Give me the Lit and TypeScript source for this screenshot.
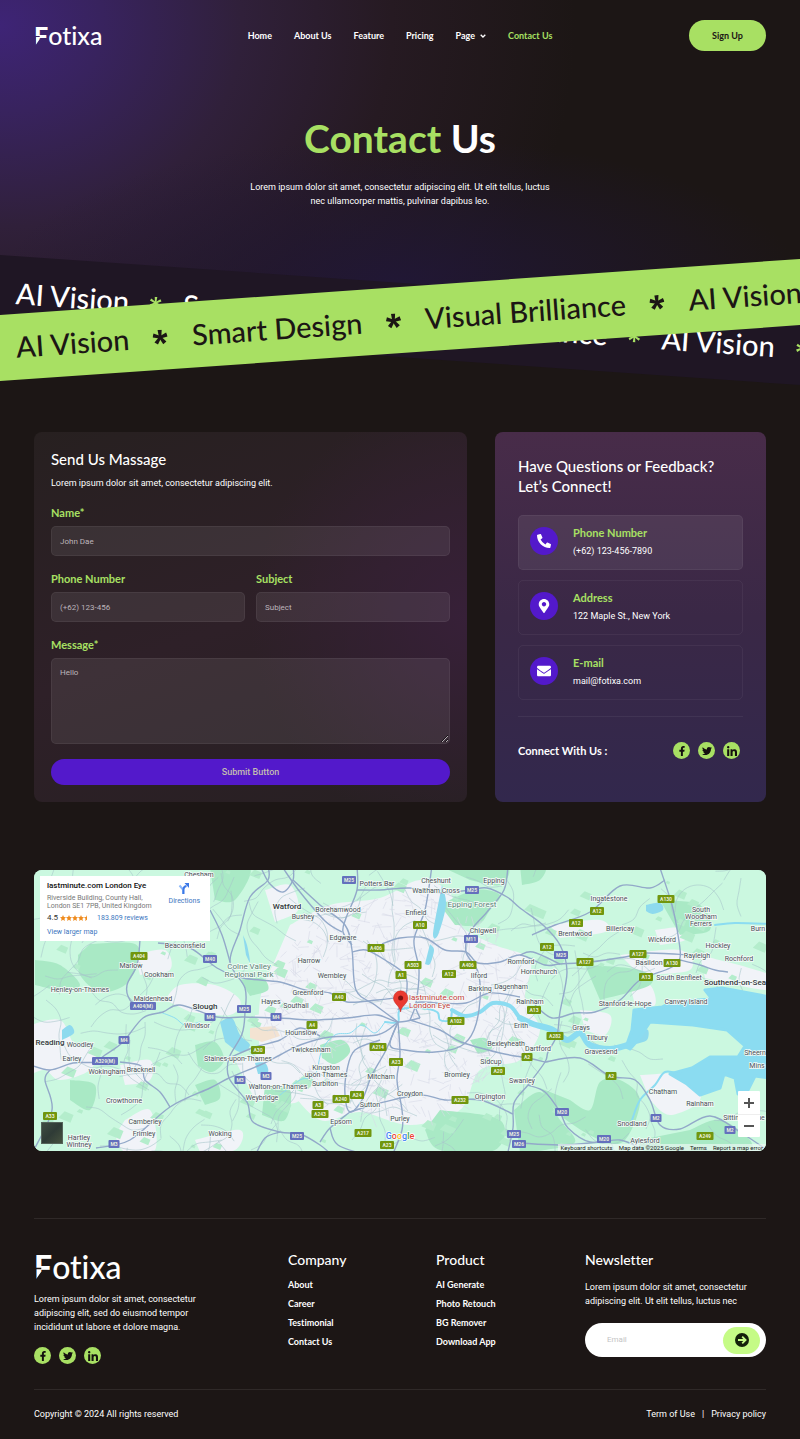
import { LitElement, html, svg, css } from "lit";
import { customElement, property } from "lit/decorators.js";

/* ---------- icons ---------- */

const ICONS: Record<string, { box: string; d: string }> = {
  facebook: {
    box: "0 0 320 512",
    d: "M279.14 288l14.22-92.66h-88.91v-60.13c0-25.35 12.42-50.06 52.24-50.06h40.42V6.26S260.43 0 225.36 0c-73.22 0-121.08 44.38-121.08 124.72v70.62H22.89V288h81.39v224h100.17V288z",
  },
  twitter: {
    box: "0 0 512 512",
    d: "M459.37 151.716c.325 4.548.325 9.097.325 13.645 0 138.72-105.583 298.558-298.558 298.558-59.452 0-114.68-17.219-161.137-47.106 8.447.974 16.568 1.299 25.34 1.299 49.055 0 94.213-16.568 130.274-44.832-46.132-.975-84.792-31.188-98.112-72.772 6.498.974 12.995 1.624 19.818 1.624 9.421 0 18.843-1.3 27.614-3.573-48.081-9.747-84.143-51.98-84.143-102.985v-1.299c13.969 7.797 30.214 12.67 47.431 13.319-28.264-18.843-46.781-51.005-46.781-87.391 0-19.492 5.197-37.36 14.294-52.954 51.655 63.675 129.3 105.258 216.365 109.807-1.624-7.797-2.599-15.918-2.599-24.04 0-57.828 46.782-104.934 104.934-104.934 30.213 0 57.502 12.67 76.67 33.137 23.715-4.548 46.456-13.32 66.599-25.34-7.798 24.366-24.366 44.833-46.132 57.827 21.117-2.273 41.584-8.122 60.426-16.243-14.292 20.791-32.161 39.308-52.628 54.253z",
  },
  linkedin: {
    box: "0 0 448 448",
    d: "M100.28 448H7.4V148.9h92.88zM53.79 108.1C24.09 108.1 0 83.5 0 53.8a53.79 53.79 0 0 1 107.58 0c0 29.7-24.1 54.3-53.79 54.3zM447.9 448h-92.68V302.4c0-34.7-.7-79.2-48.29-79.2-48.29 0-55.69 37.7-55.69 76.7V448h-92.78V148.9h89.08v40.8h1.3c12.4-23.5 42.69-48.3 87.88-48.3 94 0 111.28 61.9 111.28 142.3V448z",
  },
  phone: {
    box: "0 0 512 512",
    d: "M497.39 361.8l-112-48a24 24 0 0 0-28 6.9l-49.6 60.6A370.66 370.66 0 0 1 130.6 204.11l60.6-49.6a23.94 23.94 0 0 0 6.9-28l-48-112A24.16 24.16 0 0 0 122.6.61l-104 24A24 24 0 0 0 0 48c0 256.5 207.9 464 464 464a24 24 0 0 0 23.4-18.6l24-104a24.29 24.29 0 0 0-14.01-27.6z",
  },
  marker: {
    box: "0 0 384 512",
    d: "M172.268 501.67C26.97 291.031 0 269.413 0 192 0 85.961 85.961 0 192 0s192 85.961 192 192c0 77.413-26.97 99.031-172.268 309.67-9.535 13.774-29.93 13.773-39.464 0zM192 272c44.183 0 80-35.817 80-80s-35.817-80-80-80-80 35.817-80 80 35.817 80 80 80z",
  },
  envelope: {
    box: "0 0 512 512",
    d: "M502.3 190.8c3.9-3.1 9.7-.2 9.7 4.7V400c0 26.5-21.5 48-48 48H48c-26.5 0-48-21.5-48-48V195.6c0-5 5.7-7.8 9.7-4.7 22.4 17.4 52.1 39.5 154.1 113.6 21.1 15.4 56.7 47.8 92.2 47.6 35.7.3 72-32.8 92.3-47.6 102-74.1 131.6-96.3 154-113.7zM256 320c23.2.4 56.6-29.2 73.4-41.4 132.7-96.3 142.8-104.7 173.4-128.7 5.8-4.5 9.2-11.5 9.2-18.9v-19c0-26.5-21.5-48-48-48H48c-26.5 0-48 21.5-48 48v19c0 7.4 3.4 14.3 9.2 18.9 30.6 23.9 40.7 32.4 173.4 128.7 16.8 12.2 50.2 41.8 73.4 41.4z",
  },
};

const icon = (name: string) => html`
  <svg class="icon" viewBox=${ICONS[name].box} aria-hidden="true"><path d=${ICONS[name].d} fill="currentColor"></path></svg>
`;

const socials = () => html`
  <div class="socials">
    ${["facebook", "twitter", "linkedin"].map(
      (n) => html`<a class="social" href="#" aria-label=${n}>${icon(n)}</a>`,
    )}
  </div>
`;

const logo = (size: string) => html`
  <a class="logo ${size}" href="#" aria-label="Fotixa"><span class="logo-f">F</span>otixa</a>
`;

/* ---------- map data ---------- */

type Pt = [number, number];

const pts = (s: string): Pt[] => s.split(" ").map((p) => p.split(",").map(Number) as Pt);

const curve = (s: string | Pt[]): string => {
  const p = typeof s === "string" ? pts(s) : s;
  let d = `M${p[0][0]} ${p[0][1]}`;
  for (let i = 0; i < p.length - 1; i++) {
    const a = p[Math.max(0, i - 1)];
    const b = p[i];
    const c = p[i + 1];
    const e = p[Math.min(p.length - 1, i + 2)];
    const f = (n: number) => n.toFixed(1);
    d += `C${f(b[0] + (c[0] - a[0]) / 6)} ${f(b[1] + (c[1] - a[1]) / 6)} ${f(c[0] - (e[0] - b[0]) / 6)} ${f(c[1] - (e[1] - b[1]) / 6)} ${c[0]} ${c[1]}`;
  }
  return d;
};

const seeded = (seed: number) => () => {
  seed = (seed * 16807) % 2147483647;
  return seed / 2147483647;
};

const MOTORWAYS = [
  "268,866 268,880 250,897 240,930 230,962 245,988 245,1012 242,1034 229,1058 229,1078 247,1102 253,1122 280,1132 300,1134 320,1145 333,1156",
  "262,870 270,884 283,892 293,880 293,866",
  "293,880 320,905 345,925 352,950 356,990 375,1005 398,1022",
  "283,868 300,892 325,921 342,932",
  "357,866 357,890 346,918 343,932 352,945",
  "357,890 380,890 410,888 440,893 470,890 487,888 507,897 520,908 543,925 560,945 567,972 560,1012 557,1035 548,1052 545,1062 528,1085 514,1103 513,1128 507,1156",
  "508,866 504,890 487,912 470,932 466,952 478,972 480,1000 474,1030 461,1046 435,1052 405,1050 390,1045 398,1022",
  "30,1065 50,1070 73,1063 95,1062 105,1055 123,1042 143,1018 163,1012 180,1005 217,1017 243,1017 280,1018 313,1020 347,1018 377,1015 398,1022 420,1018",
  "96,1148 130,1140 170,1107 210,1088 229,1078 260,1065 280,1055 300,1045 330,1037 377,1035 398,1022",
  "158,943 190,948 217,968 243,978 280,982 305,990 330,993 347,1002 377,1000 403,997",
  "382,944 400,938 425,938 445,950 466,952 478,963 500,962 520,955 545,965 560,964 590,962 625,957 645,953 690,955",
  "352,952 366,950 385,960 405,975 406,995 398,1010",
  "432,866 425,910 414,940 419,970 416,1003 410,1020",
  "528,1085 545,1092 560,1112 568,1128 590,1142 620,1140 640,1148",
  "520,1143 560,1145 600,1142",
  "545,1062 580,1058 610,1076 635,1080 650,1100 660,1125 680,1129 710,1116 740,1132 770,1152",
  "660,868 672,905 678,935 680,958 670,968 640,980 620,1000 595,1012 575,1013 552,1018 535,1005",
  "532,935 555,925 590,912 620,886 650,888 665,880",
  "560,964 533,952 520,955",
  "410,1020 440,1030 461,1042 500,1053 528,1058 545,1062",
  "420,1018 416,1003 440,1003 466,1003 490,993 520,997",
  "398,1022 400,1055 397,1080 402,1110 402,1130 392,1156",
  "398,1022 386,1050 372,1075 362,1100 350,1112 345,1095 347,1070 355,1050 380,1040",
  "350,1112 330,1128 320,1142",
  "350,1112 380,1103 420,1095 445,1100 480,1100 513,1114",
  "34,1150 52,1110 45,1080 50,1070",
  "140,940 137,965 127,985 130,1000 143,1010",
  "170,1107 160,1092 145,1080 141,1066 120,1062",
  "210,910 222,935 230,962",
  "680,960 700,965 715,970 728,972",
  "229,1058 255,1047 280,1040 300,1028 320,1036",
  "280,1132 265,1138 255,1156",
  "330,1128 338,1145 370,1156",
];

const GREENS = [
  "90,944 135,944 137,965 125,985 100,992 80,975 78,955",
  "320,1045 342,1040 350,1052 335,1064 322,1058",
  "440,905 475,890 500,895 490,910 478,925 455,925",
  "540,1088 560,1115 600,1140 625,1140 640,1100 620,1080 600,1082 590,1110 570,1100",
  "514,1110 540,1092 560,1120 575,1142 545,1150 520,1152",
  "690,1130 720,1120 750,1140 740,1152 650,1152 640,1140",
  "195,1045 215,1042 224,1060 212,1072 198,1066",
  "195,1085 215,1080 220,1098 205,1105",
  "240,980 262,978 268,990 250,996",
  "520,866 545,866 540,880 522,885",
  "440,866 505,866 500,885 470,880",
  "470,1040 485,1038 492,1048 478,1054",
  "35,960 60,965 80,985 60,990 35,985",
  "70,1080 95,1085 90,1110 70,1100",
  "585,965 640,970 650,985 600,1000",
  "210,868 250,868 235,900 215,900",
  "440,1110 500,1120 495,1150 440,1150 425,1130",
  "265,1085 290,1090 285,1120 262,1115",
  "660,900 700,905 710,930 680,935",
];

const URBAN = [
  "290,925 330,905 380,898 420,880 450,893 460,925 495,945 530,960 525,1000 540,1030 520,1060 480,1070 460,1110 410,1125 360,1112 320,1120 285,1085 262,1062 260,1000 275,960",
  "30,1025 60,1020 75,1045 95,1050 90,1070 60,1080 45,1070 30,1075",
  "165,1000 180,985 215,985 240,1000 230,1015 190,1012",
  "120,1065 150,1060 150,1080 125,1085",
  "125,1120 150,1110 155,1150 125,1152 115,1135",
  "265,890 290,885 298,910 275,922",
  "195,1140 240,1130 235,1150 200,1152",
  "620,955 680,950 690,970 640,975",
  "700,955 770,975 768,990 705,978",
  "640,1075 690,1075 700,1100 670,1115 650,1100",
  "135,955 165,950 170,970 140,975",
  "550,925 600,920 605,932 560,938",
  "580,1010 610,1015 605,1035 585,1030",
  "255,1015 278,1015 278,1040 255,1035",
  "655,930 680,928 685,940 660,945",
  "235,1060 300,1050 300,1100 255,1100",
  "630,985 650,985 655,1005 635,1005",
];

const LAKES = [
  "220,1022 232,1018 240,1035 250,1045 240,1052 225,1042",
  "255,1063 265,1063 268,1072 258,1074",
  "442,885 446,905 438,935 433,935 437,910",
  "430,944 434,950 430,964 425,964",
  "646,905 660,903 663,910 653,914 646,911",
  "62,1030 70,1025 74,1033 62,1040",
  "243,935 247,945 250,962 246,955",
  "640,1030 648,1030 647,1040 636,1044",
];

const ESTUARY =
  "M626 1047L632 1030L634 1010L662 1007L672 1002L712 999L705 990L722 988L770 997V1078L755 1076L748 1090L738 1094L735 1078L724 1074L720 1088L700 1095L687 1084L670 1074L692 1068L710 1057L738 1057L745 1046L727 1030L693 1025L650 1022L638 1040L630 1049Z";

const TOWNS: [number, number, string][] = [
  [199, 877, "Chesham"], [377, 886, "Potters Bar"], [436, 883, "Cheshunt"], [436, 893, "Waltham Cross"],
  [494, 883, "Epping"], [338, 912, "Borehamwood"], [303, 919, "Bushey"], [416, 915, "Enfield"],
  [483, 933, "Chigwell"], [343, 940, "Edgware"], [309, 963, "Harrow"], [332, 978, "Wembley"],
  [308, 995, "Greenford"], [296, 1008, "Southall"], [271, 1004, "Hayes"], [301, 1035, "Hounslow"],
  [311, 1052, "Twickenham"], [326, 1070, "Kingston"], [326, 1077, "upon Thames"], [325, 1086, "Surbiton"],
  [381, 1079, "Mitcham"], [370, 1107, "Sutton"], [341, 1124, "Epsom"], [400, 1121, "Purley"],
  [410, 1096, "Croydon"], [457, 1077, "Bromley"], [490, 1099, "Orpington"], [491, 1064, "Sidcup"],
  [506, 1046, "Bexleyheath"], [479, 978, "Ilford"], [480, 991, "Barking"], [511, 989, "Dagenham"],
  [521, 964, "Romford"], [539, 974, "Hornchurch"], [530, 1004, "Rainham"], [521, 1028, "Erith"],
  [522, 1083, "Swanley"], [538, 1051, "Dartford"], [581, 1030, "Grays"], [597, 1040, "Tilbury"],
  [601, 1054, "Gravesend"], [625, 1006, "Stanford-le-Hope"], [686, 1004, "Canvey Island"],
  [679, 980, "South Benfleet"], [649, 965, "Basildon"], [697, 958, "Rayleigh"], [718, 948, "Hockley"],
  [739, 961, "Rochford"], [662, 942, "Wickford"], [620, 931, "Billericay"], [575, 936, "Brentwood"],
  [609, 901, "Ingatestone"], [701, 912, "South"], [701, 919, "Woodham"], [701, 926, "Ferrers"],
  [758, 931, "Burn"], [755, 1055, "Sheern"], [757, 1068, "Mins"], [663, 1094, "Chatham"],
  [700, 1106, "Rainham"], [632, 1126, "Snodland"], [645, 1143, "Aylesford"], [744, 1120, "Sittingbourne"],
  [185, 948, "Beaconsfield"], [131, 968, "Marlow"], [159, 977, "Cookham"], [80, 992, "Henley-on-Thames"],
  [153, 1001, "Maidenhead"], [197, 1028, "Windsor"], [80, 1047, "Woodley"], [72, 1061, "Earley"],
  [107, 1074, "Wokingham"], [141, 1072, "Bracknell"], [124, 1103, "Crowthorne"], [145, 1124, "Camberley"],
  [144, 1136, "Frimley"], [79, 1140, "Hartley"], [79, 1147, "Wintney"], [220, 1136, "Woking"],
  [262, 1100, "Weybridge"], [278, 1089, "Walton-on-Thames"], [238, 1061, "Staines-upon-Thames"],
];

const CITIES: [number, number, string][] = [
  [287, 909, "Watford"], [205, 1009, "Slough"], [50, 1045, "Reading"], [735, 985, "Southend-on-Sea"],
];

const SHIELDS: [number, number, string][] = [
  [349, 880, "M25"], [472, 890, "M25"], [471, 939, "M11"], [210, 959, "M40"], [244, 1009, "M25"],
  [210, 1017, "M4"], [143, 1006, "A404(M)"], [124, 1040, "M4"], [105, 1061, "A329(M)"], [276, 1017, "M4"],
  [240, 1080, "M3"], [266, 1076, "M3"], [114, 1144, "M3"], [297, 1136, "M25"], [514, 1134, "M25"],
  [519, 1144, "M26"], [561, 955, "M25"], [562, 1112, "M20"], [604, 1139, "M20"], [656, 1118, "M2"],
  [730, 1130, "M2"], [139, 956, "A404"], [258, 1050, "A30"], [50, 1116, "A33"], [420, 925, "A10"],
  [376, 948, "A406"], [413, 965, "A503"], [401, 975, "A1"], [449, 974, "A12"], [468, 965, "A406"],
  [339, 997, "A40"], [312, 1025, "A4"], [456, 1021, "A102"], [378, 1047, "A214"], [396, 1062, "A23"],
  [498, 1071, "A20"], [341, 1099, "A240"], [357, 1095, "A24"], [318, 1105, "A3"], [320, 1114, "A243"],
  [460, 1100, "A232"], [363, 1133, "A217"], [387, 1145, "A23"], [666, 899, "A130"], [597, 911, "A12"],
  [576, 923, "A12"], [547, 947, "A12"], [585, 962, "A127"], [638, 954, "A127"], [672, 963, "A130"],
  [646, 977, "A13"], [534, 1010, "A13"], [555, 1036, "A282"], [527, 1057, "A2"], [611, 1076, "A2"],
  [705, 1136, "A249"],
];

const minorRoads = (): string => {
  const rnd = seeded(4711);
  let d = "";
  for (let i = 0; i < 210; i++) {
    let x = 34 + rnd() * 732;
    let y = 870 + rnd() * 281;
    if (x > 632 && y > 985 && y < 1100) continue;
    const line: Pt[] = [[x, y]];
    let a = rnd() * Math.PI * 2;
    const n = 3 + Math.floor(rnd() * 4);
    for (let k = 0; k < n; k++) {
      a += (rnd() - 0.5) * 1.4;
      x = Math.round(x + Math.cos(a) * 13);
      y = Math.round(y + Math.sin(a) * 13);
      line.push([x, y]);
    }
    d += curve(line);
  }
  return d;
};

const cityStreets = (): string => {
  const rnd = seeded(977);
  let d = "";
  for (let i = 0; i < 520; i++) {
    const t = rnd() * Math.PI * 2;
    const r = Math.sqrt(rnd());
    const x = 398 + Math.cos(t) * r * 135;
    const y = 1005 + Math.sin(t) * r * 112;
    const a = rnd() * Math.PI;
    const l = 5 + rnd() * 12;
    d += `M${x.toFixed(1)} ${y.toFixed(1)}l${(Math.cos(a) * l).toFixed(1)} ${(Math.sin(a) * l).toFixed(1)}`;
  }
  return d;
};

const parks = (): string => {
  const rnd = seeded(31337);
  let d = "";
  for (let i = 0; i < 150; i++) {
    const x = 40 + rnd() * 720;
    const y = 872 + rnd() * 275;
    const r = 2 + rnd() * 5;
    if (x > 620 && y > 985) continue;
    d += `M${(x - r).toFixed(1)} ${y.toFixed(1)}l${r.toFixed(1)} ${(-r).toFixed(1)}l${(r * 1.4).toFixed(1)} ${(r * 0.6).toFixed(1)}l${(-r * 0.5).toFixed(1)} ${(r * 1.2).toFixed(1)}z`;
  }
  return d;
};

@customElement("region-map")
export class RegionMap extends LitElement {
  static styles = css`
    :host {
      display: block;
      position: relative;
      overflow: hidden;
      border-radius: 8px;
      background: #ccf8e1;
      font-family: Roboto, "Liberation Sans", sans-serif;
      --link: #3a76c0;
    }
    .canvas { display: block; width: 100%; height: auto; }
    .town { font-size: 7px; fill: #4a4f57; text-anchor: middle; stroke: #f4fbf8; stroke-width: 1.6; paint-order: stroke; }
    .city { font-size: 8px; font-weight: 500; fill: #33373d; }
    .park { font-size: 8px; fill: #5b8377; }
    .poi { font-size: 8px; fill: #c53a3a; text-anchor: start; }
    .shield { font-size: 5px; font-weight: 700; fill: #e9eedd; text-anchor: middle; }
    .brand { font-size: 9px; font-weight: 500; text-anchor: middle; stroke: #fff; stroke-width: 1.4; paint-order: stroke; }
    a { color: var(--link); text-decoration: none; }
    .place {
      position: absolute;
      top: 6px;
      left: 6px;
      display: grid;
      grid-template-columns: 1fr auto;
      width: 170px;
      height: 65px;
      box-sizing: border-box;
      padding: 5px 10px 4px 7px;
      background: #fff;
      font-size: 7px;
      line-height: 8px;
      color: #777;
      white-space: nowrap;
    }
    .name { margin: 0 0 3px; font-size: 8px; line-height: 10px; font-weight: 500; color: #111; }
    .addr { margin: 0; }
    .rating { display: flex; align-items: center; gap: 2px; margin: 4px 0 6px; }
    .score { font-size: 8px; color: #333; }
    .stars { width: 30px; height: 6px; margin-right: 5px; }
    .directions { display: flex; flex-direction: column; align-items: center; gap: 3px; padding-top: 1px; }
    .directions svg { width: 12px; height: 12px; }
    .zoom {
      position: absolute;
      right: 6px;
      bottom: 14px;
      display: flex;
      flex-direction: column;
      width: 22px;
      background: #fff;
      border-radius: 1px;
    }
    .zoom button { height: 23px; padding: 0; border: 0; background: none; display: grid; place-items: center; }
    .zoom button + button { border-top: 1px solid #eee; }
    .zoom svg { width: 12px; height: 12px; }
    .satellite {
      position: absolute;
      left: 7px;
      bottom: 7px;
      width: 22px;
      height: 22px;
      padding: 0;
      border: 1px solid #55635a;
      background: linear-gradient(135deg, #3e4c42, #2f3b36 50%, #46523f);
    }
    .legal {
      position: absolute;
      right: 0;
      bottom: 0;
      display: flex;
      gap: 6px;
      padding: 0 3px;
      font-size: 6px;
      line-height: 7px;
      background: rgba(245, 250, 248, 0.6);
    }
    .legal a, .legal span { color: #222; }
  `;

  private shield([x, y, t]: [number, number, string]) {
    const w = t.length * 3 + 5;
    return svg`
      <rect x=${x - w / 2} y=${y - 4} width=${w} height="8" rx="1" fill=${t.includes("M") ? "#6470bd" : "#71960e"}></rect>
      <text class="shield" x=${x} y=${y + 2}>${t}</text>`;
  }

  render() {
    return html`
      <svg class="canvas" viewBox="34 870 732 281" role="img" aria-label="Map of London">
        <rect x="34" y="870" width="732" height="281" fill="#cbf8e0"></rect>
        ${URBAN.map((u) => svg`<path d=${curve(u) + "Z"} fill="#f1f3f8"></path>`)}
        ${GREENS.map((g) => svg`<path d=${curve(g) + "Z"} fill="#a9e9c5"></path>`)}
        <path d=${parks()} fill="#b4edcc"></path>
        <path d="M250 1028L275 1026L280 1036L262 1042L250 1038Z" fill="#f3e3d2"></path>
        <path d=${minorRoads()} fill="none" stroke="#a8c6cb" stroke-width=".6"></path>
        <path d=${cityStreets()} fill="none" stroke="#d6dae7" stroke-width=".6"></path>
        ${LAKES.map((l) => svg`<path d=${curve(l) + "Z"} fill="#8edaee"></path>`)}
        <path d=${ESTUARY} fill="#8bdcf1" stroke="#8bdcf1" stroke-width="3" stroke-linejoin="round"></path>
        <g fill="none" stroke="#8bdcf1" stroke-linecap="round">
          <path d=${curve("520,1018 533,1024 553,1030 567,1040 580,1033 590,1045 610,1049 628,1045")} stroke-width="6"></path>
          <path d=${curve("452,1010 465,1016 480,1012 493,1003 510,1006 520,1018 530,1024")} stroke-width="4"></path>
          <path d=${curve("385,1022 398,1022 400,1010 420,1008 437,1012 440,1020 450,1020 452,1010")} stroke-width="2"></path>
          <path d=${curve("280,1095 300,1080 315,1075 322,1050 335,1035 350,1033 362,1025 375,1033 385,1022")} stroke-width="1"></path>
          <path d=${curve("715,925 735,923 770,924")} stroke-width="2"></path>
          <path d=${curve("632,1120 640,1100 655,1085 665,1072 680,1074")} stroke-width="2"></path>
          <path d=${curve("160,1012 175,1018 185,1025 200,1022")} stroke-width="1"></path>
        </g>
        ${MOTORWAYS.map(
          (m) => svg`<path d=${curve(m)} fill="none" stroke="#93a9c9" stroke-width="1.4" stroke-linejoin="round"></path>`,
        )}
        ${SHIELDS.map((s) => this.shield(s))}
        ${TOWNS.map(([x, y, t]) => svg`<text class="town" x=${x} y=${y}>${t}</text>`)}
        ${CITIES.map(([x, y, t]) => svg`<text class="town city" x=${x} y=${y}>${t}</text>`)}
        <text class="town park" x="249" y="969">Colne Valley</text>
        <text class="town park" x="249" y="977">Regional Park</text>
        <text class="town park" x="472" y="907">Epping Forest</text>
        <text class="town poi" x="409" y="1000">lastminute.com</text>
        <text class="town poi" x="409" y="1008">London Eye</text>
        <path d="M400.500 1012C399.500 1005 393.500 1004 393.500 998A7.200 7.200 0 0 1 407.900 998C407.900 1004 401.500 1005 400.500 1012Z" fill="#ea3a30" stroke="#c4261f" stroke-width=".5"></path>
        <circle cx="400.600" cy="998" r="2.500" fill="#7d1210"></circle>
        <text class="brand" x="400" y="1139"><tspan fill="#4285f4">G</tspan><tspan fill="#ea4335">o</tspan><tspan fill="#fbbc05">o</tspan><tspan fill="#4285f4">g</tspan><tspan fill="#34a853">l</tspan><tspan fill="#ea4335">e</tspan></text>
      </svg>
      <div class="place">
        <div>
          <p class="name">lastminute.com London Eye</p>
          <p class="addr">Riverside Building, County Hall,<br />London SE1 7PB, United Kingdom</p>
          <p class="rating">
            <span class="score">4.5</span>
            <svg class="stars" viewBox="0 0 50 10" aria-hidden="true">
              ${[0, 1, 2, 3].map(
                (i) => svg`<path transform="translate(${i * 10} 0)" d="M5 0L6.500 3.400L10 3.800L7.400 6.200L8.100 9.800L5 8L1.900 9.800L2.600 6.200L0 3.800L3.500 3.400Z" fill="#ef8b1d"></path>`,
              )}
              <path d="M45 0V8L41.900 9.800L42.600 6.200L40 3.800L43.500 3.400Z" fill="#ef8b1d"></path>
            </svg>
            <a href="#">183.809 reviews</a>
          </p>
          <a href="#">View larger map</a>
        </div>
        <a class="directions" href="#">
          <svg viewBox="0 0 24 24" aria-hidden="true">
            <path d="M10 24V15L3 7" fill="none" stroke="#8db8f7" stroke-width="4"></path>
            <path d="M11 24V15Q11 9 17 8" fill="none" stroke="#3b78e7" stroke-width="4"></path>
            <path d="M13 2H22V12Z" fill="#3b78e7"></path>
          </svg>
          Directions
        </a>
      </div>
      <button class="satellite" aria-label="Satellite view"></button>
      <div class="zoom">
        <button aria-label="Zoom in"><svg viewBox="0 0 12 12"><path d="M6 1V11M1 6H11" stroke="#555" stroke-width="2"></path></svg></button>
        <button aria-label="Zoom out"><svg viewBox="0 0 12 12"><path d="M1 6H11" stroke="#555" stroke-width="2"></path></svg></button>
      </div>
      <div class="legal">
        <a href="#">Keyboard shortcuts</a><span>Map data ©2025 Google</span><a href="#">Terms</a><a href="#">Report a map error</a>
      </div>
    `;
  }
}

/* ---------- scrolling word band ---------- */

@customElement("word-band")
export class WordBand extends LitElement {
  @property({ reflect: true }) tone = "lime";

  static styles = css`
    :host {
      display: flex;
      align-items: center;
      box-sizing: border-box;
      width: 110%;
      margin-left: -5%;
      padding-left: 55px;
      overflow: hidden;
      white-space: nowrap;
      font-family: Lato, "Liberation Sans", sans-serif;
      font-variant-ligatures: none;
      font-size: 29px;
      font-weight: 500;
    }
    :host([tone="lime"]) { height: 66px; gap: 24px; background: #a8e063; color: #1c1615; transform: rotate(-4deg); }
    :host([tone="dark"]) { height: 74px; gap: 21px; background: #1f1624; color: #fff; transform: rotate(4deg); }
    .star { flex: none; width: 15px; height: 15px; }
    :host([tone="dark"]) .star { width: 12px; height: 12px; color: #a8e063; }
  `;

  private star() {
    const lime = this.tone === "lime";
    const arms = lime ? [0, 72, 144, 216, 288] : [0, 60, 120, 180, 240, 300];
    const arm = lime ? "M-1.300 0L-2.200 -7.800H2.200L1.300 0Z" : "M-.9 0L-1.700 -8H1.700L.9 0Z";
    return html`<svg class="star" viewBox="-8 -8 16 16" aria-hidden="true">
      ${arms.map((a) => svg`<path transform="rotate(${a})" d=${arm} fill="currentColor"></path>`)}
      <circle r="2" fill="currentColor"></circle>
    </svg>`;
  }

  render() {
    return ["AI Vision", "Smart Design", "Visual Brilliance", "AI Vision"].map(
      (w) => html`<span>${w}</span>${this.star()}`,
    );
  }
}

/* ---------- page ---------- */

@customElement("app-root")
export class AppRoot extends LitElement {
  static styles = css`
    :host {
      display: block;
      --lime: #a8e063;
      --violet: #5319cb;
      --ink: #1c1615;
      --head: Lato, "Liberation Sans", sans-serif;
      background: var(--ink);
      color: #fff;
      font: 9px/14px Roboto, "Noto Sans", sans-serif;
      overflow: hidden;
    }
    * { box-sizing: border-box; }
    a { color: inherit; text-decoration: none; }
    p, h1, h2, h3, ul { margin: 0; padding: 0; }
    ul { list-style: none; }
    .icon { display: block; }

    .top {
      background:
        radial-gradient(ellipse 50% 45% at 50% 88%, rgba(33, 23, 54, 0.95), rgba(33, 23, 54, 0) 100%),
        radial-gradient(ellipse 72% 150% at 0 8%, #3e2476 0, #38235e 18%, #30203a 42%, #261a22 68%, #1c1615 100%);
    }
    header {
      display: grid;
      grid-template-columns: 1fr auto 1fr;
      align-items: center;
      padding: 20px 34px 0;
    }
    .logo { display: inline-block; font: 500 25px/26px var(--head); color: #fff; }
    .logo.big { font-size: 32px; line-height: 33px; }
    .logo-f {
      display: inline-block;
      font-weight: 900;
      clip-path: polygon(0 0, 100% 0, 100% 66%, 40% 66%, 12% 88%, 12% 58%, 40% 58%, 40% 54%, 0 54%);
    }
    nav { display: flex; gap: 22px; font: 700 9px/14px var(--head); }
    .chev { width: 6px; height: 4px; margin-left: 5px; vertical-align: 1px; }
    .active { color: var(--lime); }
    .signup {
      justify-self: end;
      width: 77px;
      height: 31px;
      border: 0;
      border-radius: 16px;
      background: var(--lime);
      color: var(--ink);
      font: 700 9px/14px var(--head);
    }

    .hero { padding: 61px 34px 112px; text-align: center; }
    h1 { font: 700 39px/52px var(--head); }
    h1 span { color: var(--lime); }
    .hero p { width: 310px; margin: 16px auto 0; }

    .bands { display: grid; align-items: center; height: 130px; margin-top: -65px; }
    .bands > * { grid-area: 1 / 1; }

    .contact {
      display: grid;
      grid-template-columns: 433fr 271fr;
      gap: 28px;
      padding: 47px 34px 68px;
    }
    .panel { border-radius: 8px; }
    .form {
      padding: 17px;
      background:
        radial-gradient(ellipse 50% 60% at 100% 50%, rgba(56, 32, 58, 0.9), rgba(56, 32, 58, 0) 100%),
        linear-gradient(160deg, #272020, #2e2028 50%, #272022);
    }
    h2 { font: 500 15px/20px var(--head); }
    .form h2 { margin-bottom: 7px; }
    .fields { display: grid; grid-template-columns: 1fr 1fr; gap: 15px 11px; margin-top: 15px; }
    .field { display: flex; flex-direction: column; gap: 5px; }
    .wide { grid-column: 1 / -1; }
    label, .label { font: 700 11px/16px var(--head); color: var(--lime); }
    .field input, textarea {
      width: 100%;
      height: 30px;
      margin: 0;
      padding: 0 8px;
      border: 1px solid rgba(255, 255, 255, 0.06);
      border-radius: 5px;
      background: rgba(255, 255, 255, 0.08);
      color: #fff;
      font: 8px/12px Roboto, sans-serif;
    }
    textarea { display: block; height: 86px; padding: 8px; }
    .field ::placeholder { color: #bdb5bb; opacity: 1; }
    .submit {
      height: 26px;
      border: 0;
      border-radius: 13px;
      background: var(--violet);
      color: #c3bdb0;
      font: 500 9px/14px Roboto, sans-serif;
    }

    .info { padding: 24px 23px; background: linear-gradient(#482c49, #3a2846 50%, #32284d); }
    .cards { display: grid; gap: 10px; margin-top: 19px; }
    .card {
      display: grid;
      grid-template-columns: 28px 1fr;
      gap: 15px;
      height: 55px;
      padding: 9px 11px;
      border: 1px solid rgba(255, 255, 255, 0.05);
      border-radius: 5px;
    }
    .card.on { background: rgba(255, 255, 255, 0.07); }
    .disc {
      display: grid;
      place-items: center;
      width: 28px;
      height: 28px;
      margin-top: 2px;
      border-radius: 50%;
      background: var(--violet);
    }
    .disc .icon { width: 14px; height: 14px; }
    .card p { margin-top: 3px; }
    .connect {
      display: flex;
      justify-content: space-between;
      align-items: center;
      margin-top: 16px;
      padding: 25px 3px 0 0;
      border-top: 1px solid rgba(255, 255, 255, 0.06);
    }
    .connect .label { color: #fff; }
    .socials { display: flex; gap: 8px; }
    .social {
      display: grid;
      place-items: center;
      width: 17px;
      height: 17px;
      border-radius: 50%;
      background: var(--lime);
      color: #14100f;
    }
    .social .icon { width: 10px; height: 10px; }

    region-map { margin: 0 34px; }

    footer { margin: 67px 34px 0; border-top: 1px solid #2f2928; }
    .cols {
      display: grid;
      grid-template-columns: 254fr 148fr 149fr 181fr;
      padding: 31px 0 25px;
    }
    .about p { width: 175px; margin: 9px 0 13px; }
    h3 { font: 500 14px/20px var(--head); }
    .links { padding-top: 3px; font: 700 9px/14px var(--head); }
    .links li { margin-top: 5px; }
    .news p { margin: 10px 0 15px; }
    .subscribe {
      display: flex;
      align-items: center;
      height: 34px;
      padding: 0 6px 0 22px;
      border-radius: 17px;
      background: #fff;
    }
    .subscribe input {
      flex: 1;
      min-width: 0;
      padding: 0;
      border: 0;
      background: none;
      color: #222;
      font: 8px/12px Roboto, sans-serif;
    }
    .subscribe ::placeholder { color: #c4c4c4; opacity: 1; }
    .go {
      display: grid;
      place-items: center;
      width: 37px;
      height: 27px;
      padding: 0;
      border: 0;
      border-radius: 14px;
      background: #c5fb86;
    }
    .go svg { width: 14px; height: 14px; }
    .legal {
      display: flex;
      justify-content: space-between;
      padding: 17px 0 18px;
      border-top: 1px solid #2f2928;
    }
    .policies { display: flex; gap: 7px; }

    h1, h2, h3, nav, label, .label, .logo, .logo.big, .links { font-variant-ligatures: none; }
  `;

  render() {
    return html`
      <div class="top">
        <header>
          <div>${logo("small")}</div>
          <nav>
            <a href="#">Home</a><a href="#">About Us</a><a href="#">Feature</a><a href="#">Pricing</a>
            <a href="#">Page<svg class="chev" viewBox="0 0 6 4" aria-hidden="true"><path d="M.7 .7L3 3L5.300 .7" fill="none" stroke="currentColor" stroke-width="1.3"></path></svg></a>
            <a class="active" href="#">Contact Us</a>
          </nav>
          <button class="signup">Sign Up</button>
        </header>
        <section class="hero">
          <h1><span>Contact</span> Us</h1>
          <p>Lorem ipsum dolor sit amet, consectetur adipiscing elit. Ut elit tellus, luctus nec ullamcorper mattis, pulvinar dapibus leo.</p>
        </section>
      </div>
      <div class="bands">
        <word-band tone="dark"></word-band>
        <word-band tone="lime"></word-band>
      </div>
      <main>
        <section class="contact">
          <form class="panel form">
            <h2>Send Us Massage</h2>
            <p>Lorem ipsum dolor sit amet, consectetur adipiscing elit.</p>
            <div class="fields">
              <div class="field wide"><label for="name">Name*</label><input id="name" placeholder="John Dae" /></div>
              <div class="field"><label for="phone">Phone Number</label><input id="phone" type="tel" placeholder="(+62) 123-456" /></div>
              <div class="field"><label for="subject">Subject</label><input id="subject" placeholder="Subject" /></div>
              <div class="field wide"><label for="message">Message*</label><textarea id="message" placeholder="Hello"></textarea></div>
              <button class="submit wide" type="button">Submit Button</button>
            </div>
          </form>
          <aside class="panel info">
            <h2>Have Questions or Feedback?<br />Let’s Connect!</h2>
            <div class="cards">
              ${[
                ["phone", "Phone Number", "(+62) 123-456-7890"],
                ["marker", "Address", "122 Maple St., New York"],
                ["envelope", "E-mail", "mail@fotixa.com"],
              ].map(
                ([i, t, v], n) => html`
                  <div class="card ${n === 0 ? "on" : ""}">
                    <span class="disc">${icon(i)}</span>
                    <div><div class="label">${t}</div><p>${v}</p></div>
                  </div>
                `,
              )}
            </div>
            <div class="connect"><span class="label">Connect With Us :</span>${socials()}</div>
          </aside>
        </section>
        <region-map></region-map>
      </main>
      <footer>
        <div class="cols">
          <div class="about">
            ${logo("big")}
            <p>Lorem ipsum dolor sit amet, consectetur adipiscing elit, sed do eiusmod tempor incididunt ut labore et dolore magna.</p>
            ${socials()}
          </div>
          ${[
            ["Company", "About", "Career", "Testimonial", "Contact Us"],
            ["Product", "AI Generate", "Photo Retouch", "BG Remover", "Download App"],
          ].map(
            ([h, ...items]) => html`
              <div>
                <h3>${h}</h3>
                <ul class="links">${items.map((i) => html`<li><a href="#">${i}</a></li>`)}</ul>
              </div>
            `,
          )}
          <div class="news">
            <h3>Newsletter</h3>
            <p>Lorem ipsum dolor sit amet, consectetur adipiscing elit. Ut elit tellus, luctus nec</p>
            <form class="subscribe">
              <input type="email" placeholder="Email" aria-label="Email" />
              <button class="go" type="button" aria-label="Subscribe">
                <svg viewBox="0 0 14 14"><circle cx="7" cy="7" r="7" fill="#14200a"></circle><path d="M3 7H10.500M7.200 3.600L10.600 7L7.200 10.400" fill="none" stroke="#c5fb86" stroke-width="1.8"></path></svg>
              </button>
            </form>
          </div>
        </div>
        <div class="legal">
          <span>Copyright © 2024 All rights reserved</span>
          <div class="policies"><a href="#">Term of Use</a><span>|</span><a href="#">Privacy policy</a></div>
        </div>
      </footer>
    `;
  }
}
